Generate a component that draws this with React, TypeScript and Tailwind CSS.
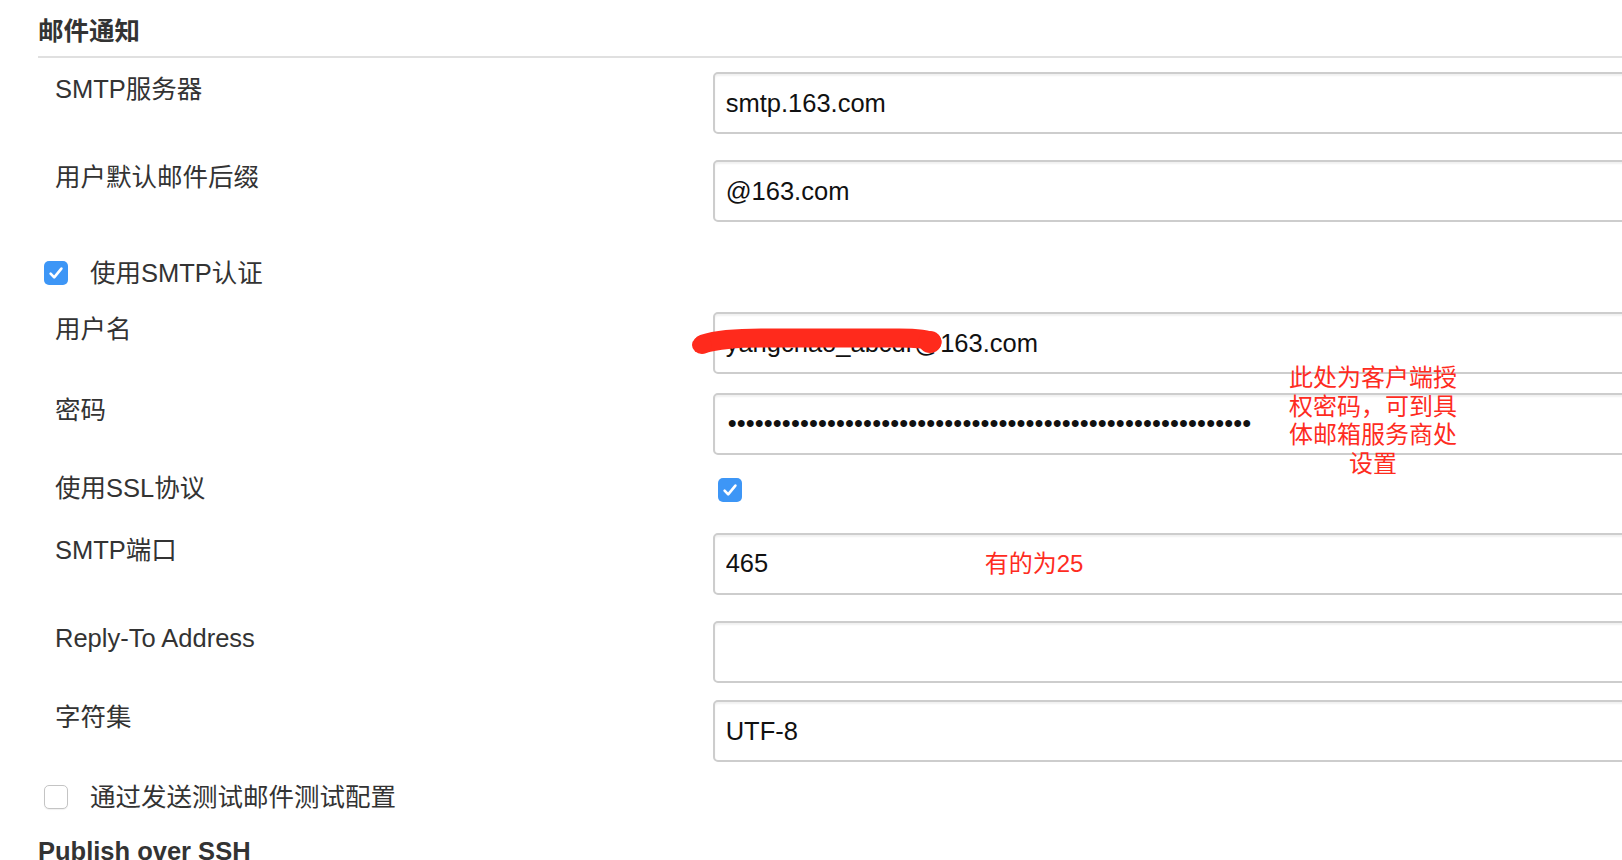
import { ReactNode } from "react";

const RED = "#fe2c1f";

function CheckBox({ checked }: { checked: boolean }) {
  if (checked) {
    return (
      <svg width="24" height="24" viewBox="0 0 24 24" className="shrink-0">
        <rect x="0" y="0" width="24" height="24" rx="5" fill="#3d96f6" />
        <path
          d="M6.6 12.6 L10.2 16.4 L17.4 7.6"
          fill="none"
          stroke="#fff"
          strokeWidth="2.6"
          strokeLinecap="round"
          strokeLinejoin="round"
        />
      </svg>
    );
  }
  return (
    <div className="w-[24px] h-[24px] shrink-0 rounded-[5px] border-[1.5px] border-[#c4c4c4] bg-white shadow-[0_1px_1px_rgba(0,0,0,0.06)]" />
  );
}

function Field({ value, children }: { value: string; children?: ReactNode }) {
  return (
    <div className="relative h-[62px] -mr-[20px]">
      <input
        readOnly
        value={value}
        className="w-full h-full border-2 border-[#cdcdcd] rounded-[5px] px-[11px] text-[25.5px] text-[#111] bg-white outline-none shadow-[inset_0_2px_2px_rgba(0,0,0,0.06)]"
      />
      {children}
    </div>
  );
}

function Row({
  label,
  h,
  children,
}: {
  label: string;
  h: string;
  children: ReactNode;
}) {
  return (
    <div className={`flex ${h}`}>
      <div className="w-[712.7px] shrink-0 pl-[55px] pt-[2px] leading-[30px] text-[#333]">
        {label}
      </div>
      <div className="flex-1 min-w-0">{children}</div>
    </div>
  );
}

function CheckRow({
  label,
  checked,
  h,
}: {
  label: string;
  checked: boolean;
  h: string;
}) {
  return (
    <div className={h}>
      <div className="flex items-center h-[30px] pl-[44px] gap-[22px] text-[#333] leading-[30px]">
        <CheckBox checked={checked} />
        <span>{label}</span>
      </div>
    </div>
  );
}

export default function App() {
  const dots = "•".repeat(58);

  return (
    <div className="relative w-full h-[860px] overflow-hidden bg-white text-[25.5px] font-['Liberation_Sans','Noto_Sans_CJK_SC',sans-serif]">
      <div className="pl-[38px] pt-[16px]">
        <div className="pb-[10px] border-b-2 border-[#e0e0e0] font-bold text-[#333] leading-[30px]">
          邮件通知
        </div>
      </div>

      <div className="mt-[14.4px]">
        <Row label="SMTP服务器" h="h-[88px]">
          <Field value="smtp.163.com" />
        </Row>
        <Row label="用户默认邮件后缀" h="h-[98px]">
          <Field value="@163.com" />
        </Row>
        <CheckRow label="使用SMTP认证" checked h="h-[54px]" />
        <Row label="用户名" h="h-[80.6px]">
          <Field value="yangchao_abcdr@163.com">
            {/* red marker scribble hiding the account name */}
            <svg
              width="270"
              height="34"
              viewBox="0 0 270 34"
              className="absolute left-[-24px] top-[14px] overflow-visible"
            >
              <path
                d="M14 18 C30 13 50 12 72 12 L210 12 C228 12 238 13 243 16"
                fill="none"
                stroke="#ff2a1c"
                strokeWidth="19"
                strokeLinecap="round"
              />
              <ellipse cx="13" cy="19" rx="10" ry="9" fill="#ff2a1c" />
              <ellipse cx="241" cy="16" rx="11.5" ry="11" fill="#ff2a1c" />
            </svg>
          </Field>
        </Row>
        <Row label="密码" h="h-[78.4px]">
          <div className="relative h-[62px] -mr-[20px] border-2 border-[#cdcdcd] rounded-[5px] bg-white shadow-[inset_0_2px_2px_rgba(0,0,0,0.06)] flex items-center px-[13px] text-[#111]">
            <span className="tracking-[0.1px] leading-none">{dots}</span>
          </div>
        </Row>
        <Row label="使用SSL协议" h="h-[61.3px]">
          <div className="pt-[6.6px] pl-[5.3px]">
            <CheckBox checked />
          </div>
        </Row>
        <Row label="SMTP端口" h="h-[88px]">
          <Field value="465">
            <span
              className="absolute left-[272px] inset-y-0 flex items-center text-[24px] pointer-events-none"
              style={{ color: RED }}
            >
              有的为25
            </span>
          </Field>
        </Row>
        <Row label="Reply-To Address" h="h-[79.6px]">
          <Field value="" />
        </Row>
        <Row label="字符集" h="h-[81.7px]">
          <Field value="UTF-8" />
        </Row>
        <CheckRow label="通过发送测试邮件测试配置" checked={false} h="h-[54px]" />
        <div className="pl-[38px] font-bold text-[#333] leading-[30px]">
          Publish over SSH
        </div>
      </div>

      <div
        className="absolute left-[1288px] top-[364px] w-[170px] text-center text-[24px] leading-[28.7px]"
        style={{ color: RED }}
      >
        此处为客户端授
        <br />
        权密码，可到具
        <br />
        体邮箱服务商处
        <br />
        设置
      </div>
    </div>
  );
}
